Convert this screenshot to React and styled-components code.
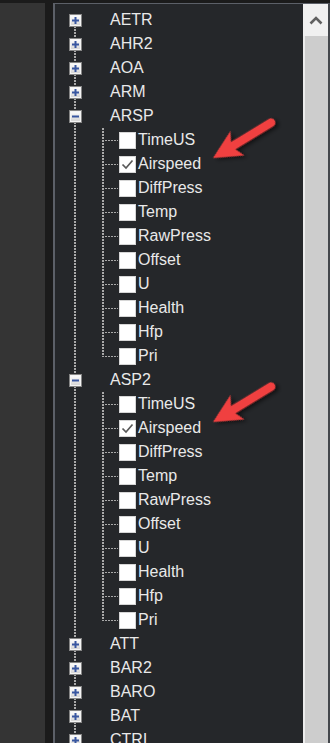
import React from "react";
import styled, { createGlobalStyle } from "styled-components";

const GlobalStyle = createGlobalStyle`
  html, body { margin: 0; padding: 0; background: #1b1b1b; }
  #root { width: 330px; height: 743px; }
`;

const Frame = styled.div`
  position: relative;
  display: flex;
  gap: 8px;
  width: 330px;
  height: 743px;
  overflow: hidden;
  background: #1b1b1b;
  font-family: "Liberation Sans", Arial, sans-serif;
`;

const SidePanel = styled.div`
  width: 45px;
  margin-top: 3px;
  background: #343434;
  flex-shrink: 0;
`;

const TreePanel = styled.div`
  flex: 1;
  display: flex;
  margin-top: 3px;
  border-top: 1px solid #5c6068;
  border-left: 2px solid #5c6068;
  border-right: 2px solid #44474c;
  background: #25272a;
  overflow: hidden;
`;

const TreeBody = styled.div`
  flex: 1;
  padding-top: 4px;
  min-width: 0;
`;

const dotsV = `repeating-linear-gradient(to bottom, #a9a9a9 0 2px, transparent 2px 3px)`;
const dotsH = `repeating-linear-gradient(to right, #a9a9a9 0 2px, transparent 2px 3px)`;

const TopNode = styled.div`
  position: relative;
  &::before {
    content: "";
    display: ${(p) => (p.$last ? "none" : "block")};
    position: absolute;
    left: 19px;
    top: 12px;
    width: 2px;
    height: 100%;
    background: ${dotsV};
  }
`;

const TopRow = styled.div`
  display: flex;
  align-items: center;
  height: 24px;
  padding-left: 14px;
`;

const Expander = styled.span`
  position: relative;
  z-index: 1;
  display: flex;
  align-items: center;
  justify-content: center;
  width: 13px;
  height: 13px;
  box-sizing: border-box;
  border: 1px solid #858585;
  background: linear-gradient(#ffffff, #d2d2d2);
  box-shadow: inset 0 0 0 1px #f4f4f4;
`;

const Label = styled.span`
  margin-left: ${(p) => p.$gap}px;
  font-size: 16px;
  line-height: 24px;
  color: #e9e9e9;
  white-space: nowrap;
`;

const ChildRow = styled.div`
  position: relative;
  display: flex;
  align-items: center;
  height: 24px;
  padding-left: 64px;
  &::before {
    content: "";
    position: absolute;
    left: 47px;
    top: 0;
    width: 2px;
    height: ${(p) => (p.$last ? "13px" : "100%")};
    background: ${dotsV};
  }
  &::after {
    content: "";
    position: absolute;
    left: 50px;
    top: 12px;
    width: 13px;
    height: 1px;
    background: ${dotsH};
  }
`;

const CheckBox = styled.span`
  display: flex;
  align-items: center;
  justify-content: center;
  width: 17px;
  height: 17px;
  box-sizing: border-box;
  background: #ffffff;
  border: 1px solid #d6d6d6;
`;

const ScrollBar = styled.div`
  width: 25px;
  flex-shrink: 0;
  display: flex;
  flex-direction: column;
  background: #ececec;
`;

const ScrollButton = styled.div`
  height: 32px;
  display: flex;
  align-items: center;
  justify-content: center;
  background: #f0f0f0;
`;

const ScrollThumb = styled.div`
  flex: 1;
  margin-left: 2px;
  background: #cdcdcd;
`;

const ArrowSvg = styled.svg`
  position: absolute;
  left: 0;
  top: ${(p) => p.$top}px;
  width: 330px;
  height: 80px;
  pointer-events: none;
  overflow: visible;
`;

const PlusIcon = ({ open }) => (
  <svg width="9" height="9" viewBox="0 0 9 9">
    <rect x="1" y="3.5" width="7" height="2" fill="#3856a0" />
    {!open && <rect x="3.5" y="1" width="2" height="7" fill="#3856a0" />}
  </svg>
);

const Check = () => (
  <svg width="15" height="15" viewBox="0 0 15 15">
    <path d="M2.5 7.5 L6 11 L12.5 3.5" fill="none" stroke="#5a5a5a" strokeWidth="1.7" />
  </svg>
);

const Arrow = ({ top }) => (
  <ArrowSvg $top={top} viewBox={`0 0 330 80`}>
    <defs>
      <filter id={`sh${top}`} x="-30%" y="-30%" width="160%" height="160%">
        <feDropShadow dx="2" dy="3" stdDeviation="2" floodColor="#000" floodOpacity="0.6" />
      </filter>
    </defs>
    <g transform="translate(213,40) rotate(-31.4)" filter={`url(#sh${top})`}>
      <path
        d="M0 0 L29 -14 L23.5 -4.2 L68 -4.2 A4.2 4.2 0 0 1 68 4.2 L23.5 4.2 L28 14 Z"
        fill="#f0403f"
      />
    </g>
  </ArrowSvg>
);

const fields = ["TimeUS", "Airspeed", "DiffPress", "Temp", "RawPress", "Offset", "U", "Health", "Hfp", "Pri"];
const nodes = [
  { name: "AETR" },
  { name: "AHR2" },
  { name: "AOA" },
  { name: "ARM" },
  { name: "ARSP", open: true },
  { name: "ASP2", open: true },
  { name: "ATT" },
  { name: "BAR2" },
  { name: "BARO" },
  { name: "BAT" },
  { name: "CTRL" },
];

export default function App() {
  return (
    <>
      <GlobalStyle />
      <Frame>
        <SidePanel />
        <TreePanel>
          <TreeBody>
            {nodes.map((n) => (
              <TopNode key={n.name}>
                <TopRow>
                  <Expander>
                    <PlusIcon open={n.open} />
                  </Expander>
                  <Label $gap={28}>{n.name}</Label>
                </TopRow>
                {n.open &&
                  fields.map((f, i) => (
                    <ChildRow key={f} $last={i === fields.length - 1}>
                      <CheckBox>{f === "Airspeed" && <Check />}</CheckBox>
                      <Label $gap={2}>{f}</Label>
                    </ChildRow>
                  ))}
              </TopNode>
            ))}
          </TreeBody>
          <ScrollBar>
            <ScrollButton>
              <svg width="14" height="9" viewBox="0 0 14 9">
                <path d="M1.5 7.5 L7 2 L12.5 7.5" fill="none" stroke="#606060" strokeWidth="2.6" />
              </svg>
            </ScrollButton>
            <ScrollThumb />
          </ScrollBar>
        </TreePanel>
        <Arrow top={118} />
        <Arrow top={382} />
      </Frame>
    </>
  );
}
